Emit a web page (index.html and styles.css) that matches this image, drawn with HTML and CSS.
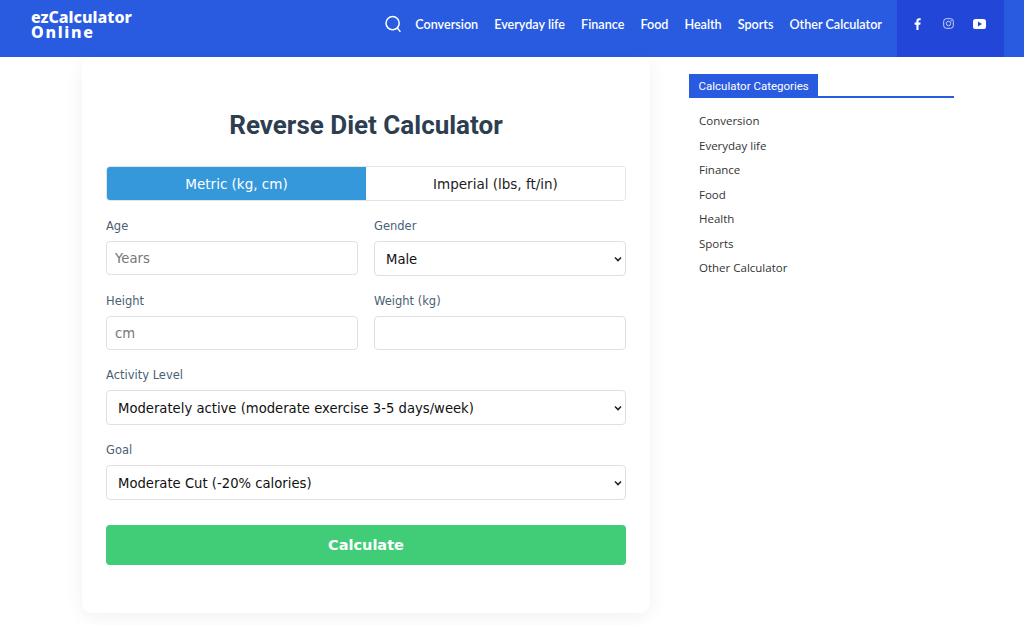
FILE: index.html
```html
<!DOCTYPE html>
<html lang="en">
<head>
<meta charset="utf-8">
<title>Reverse Diet Calculator</title>
<link rel="stylesheet" href="styles.css">
</head>
<body>
<header class="topbar">
  <a class="logo" href="#"><span>ezCalculator</span><span class="logo-2">Online</span></a>
  <nav class="nav">
    <svg class="search" width="18" height="18" viewBox="0 0 18 18" fill="none" stroke="#fff" stroke-width="1.5" stroke-linecap="round"><circle cx="8.6" cy="8.2" r="6.6"/><path d="M13.4 13l2.6 3.4"/></svg>
    <a href="#">Conversion</a>
    <a href="#">Everyday life</a>
    <a href="#">Finance</a>
    <a href="#">Food</a>
    <a href="#">Health</a>
    <a href="#">Sports</a>
    <a href="#">Other Calculator</a>
  </nav>
  <div class="social">
    <svg width="8" height="12" viewBox="0 0 8 12" fill="#fff"><path d="M2.4 12V6.7H.6V4.6h1.8V3C2.4 1.2 3.500 .2 5.100 .2c.8 0 1.400.1 1.600.1V2.200H5.600c-.9 0-1.100.4-1.100 1.100v1.300h2.100l-.3 2.100H4.500V12z"/></svg>
    <svg class="insta" width="11" height="11" viewBox="0 0 11 11" fill="none" stroke="#c9d6f7" stroke-width="1"><rect x=".7" y=".7" width="9.600" height="9.600" rx="2.600"/><circle cx="5.500" cy="5.500" r="2.200"/><circle cx="8.100" cy="2.900" r=".3"/></svg>
    <svg width="13" height="10" viewBox="0 0 13 10"><rect width="13" height="10" rx="2.600" fill="#fff"/><path d="M5 2.600v4.800L9 5z" fill="#2146d8"/></svg>
  </div>
</header>
<div class="page">
  <main class="card">
    <h1>Reverse Diet Calculator</h1>
    <div class="tabs">
      <button class="tab active" type="button">Metric (kg, cm)</button>
      <button class="tab" type="button">Imperial (lbs, ft/in)</button>
    </div>
    <div class="grid">
      <div class="field"><label>Age</label><input class="control" placeholder="Years"></div>
      <div class="field"><label>Gender</label><select class="control pick"><option>Male</option><option>Female</option></select></div>
      <div class="field"><label>Height</label><input class="control" placeholder="cm"></div>
      <div class="field"><label>Weight (kg)</label><input class="control"></div>
      <div class="field wide"><label>Activity Level</label><select class="control pick"><option>Moderately active (moderate exercise 3-5 days/week)</option></select></div>
      <div class="field wide"><label>Goal</label><select class="control pick"><option>Moderate Cut (-20% calories)</option></select></div>
    </div>
    <button class="calc" type="button">Calculate</button>
  </main>
  <aside class="side">
    <div class="side-head"><h2>Calculator Categories</h2></div>
    <ul class="side-list">
      <li>Conversion</li>
      <li>Everyday life</li>
      <li>Finance</li>
      <li>Food</li>
      <li>Health</li>
      <li>Sports</li>
      <li>Other Calculator</li>
    </ul>
  </aside>
</div>
</body>
</html>
```
FILE: styles.css
```css
* { box-sizing: border-box; }
html, body { margin: 0; padding: 0; }
body { background: #fff; font-family: "DejaVu Sans", sans-serif; height: 625px; overflow: hidden; }

.topbar { height: 57px; background: #295be0; display: flex; padding-left: 31px; padding-right: 20px; color: #fff; }
.logo { display: flex; flex-direction: column; margin-top: 10px; font-family: "Noto Sans", sans-serif; font-weight: 800; font-size: 16px; line-height: 14.500px; color: #fff; text-decoration: none; }
.logo span { height: 14.500px; }
.logo-2 { letter-spacing: 1.700px; }
.nav { margin-left: auto; display: flex; align-items: center; height: 48px; gap: 16px; font-family: "Lato", sans-serif; font-weight: 600; font-size: 12.600px; }
.nav a { color: #fff; text-decoration: none; }
.search { margin-right: -3px; }
.social { margin-left: 15px; width: 107px; background: #2146d8; display: flex; align-items: center; justify-content: space-between; height: 57px; padding: 0 18px 10px 17px; }
.insta { margin-left: 2px; }

.page { display: flex; align-items: flex-start; padding-left: 82px; }
.card { width: 568px; height: 556px; background: #fff; border-radius: 10px; box-shadow: 0 4px 20px rgba(0,0,0,.06); padding: 51px 24px 0 24px; }
h1 { margin: 0 0 24px; height: 34px; text-align: center; font-family: Roboto, sans-serif; font-weight: 700; font-size: 26px; line-height: 34px; color: #2c3e50; }

.tabs { display: flex; height: 35px; border: 1px solid #e2e5e8; border-radius: 4px; overflow: hidden; }
.tab { flex: 1; border: 0; background: #fff; color: #222; font-family: "DejaVu Sans", sans-serif; font-size: 13.500px; padding: 1px 0 0; }
.tab.active { background: #3498db; color: #fff; }

.grid { display: grid; grid-template-columns: 252px 252px; column-gap: 16px; row-gap: 18px; margin-top: 18px; }
.wide { grid-column: 1 / 3; }
.field { display: flex; flex-direction: column; }
label { display: block; height: 15px; margin-bottom: 7px; font-size: 11.500px; line-height: 15px; color: #4a5f75; }
.control { width: 100%; height: 34px; border: 1px solid #e0e0e0; border-radius: 4px; background: #fff; padding: 0 8px; font-family: "DejaVu Sans", sans-serif; font-size: 13.200px; color: #111; }
.control::placeholder { color: #777; opacity: 1; }
.pick { height: 35px; padding: 1px 20px 0 11px; appearance: none; background-image: url("data:image/svg+xml,%3Csvg xmlns='http://www.w3.org/2000/svg' width='8' height='6' viewBox='0 0 8 6'%3E%3Cpath d='M1 1.500l3 3 3-3' fill='none' stroke='%23222' stroke-width='1.600'/%3E%3C/svg%3E"); background-repeat: no-repeat; background-position: right 3px center; }

.calc { display: block; width: 100%; height: 40px; margin-top: 25px; border: 0; border-radius: 4px; background: #41cd77; color: #fff; font-family: "DejaVu Sans", sans-serif; font-weight: 700; font-size: 14.500px; }

.side { width: 265px; margin-left: 39px; padding-top: 17px; }
.side-head { border-bottom: 2px solid #295be0; height: 24px; }
.side-head h2 { margin: 0; display: inline-block; height: 24px; padding: 0 9.500px; background: #295be0; color: #fff; font-family: Roboto, sans-serif; font-weight: 400; font-size: 11.500px; line-height: 24px; }
.side-list { list-style: none; margin: 11px 0 0; padding: 0 0 0 10px; font-family: "Open Sans", sans-serif; font-size: 11.500px; color: #333; }
.side-list li { height: 24.500px; line-height: 24px; }
```
